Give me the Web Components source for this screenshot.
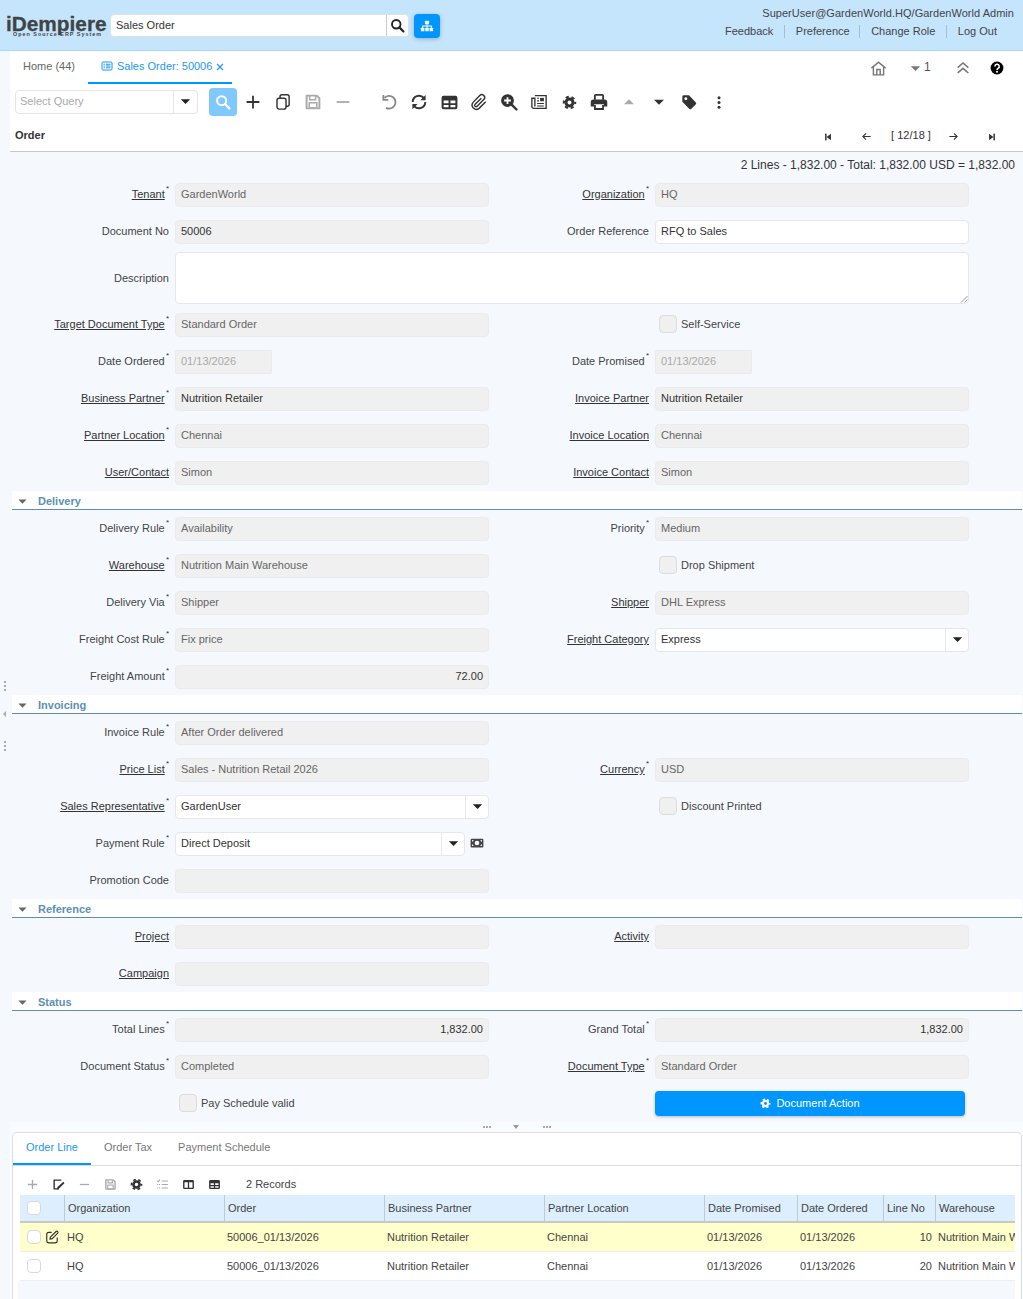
<!DOCTYPE html>
<html lang="en">
<head>
<meta charset="utf-8">
<title>iDempiere - Sales Order</title>
<style>
  html, body { margin:0; height:1299px; overflow:hidden; background:#fff; }
  body { font:11px "Liberation Sans", Arial, sans-serif; color:#444; display:flex; flex-direction:column; }
  #main { display:flex; flex:1; min-height:0; }
  #content { flex:1; min-width:0; display:flex; flex-direction:column; }
</style>
</head>
<body>
<app-header></app-header>
<div id="main">
  <side-rail></side-rail>
  <div id="content">
    <window-tabs></window-tabs>
    <window-toolbar></window-toolbar>
    <window-title></window-title>
    <form-panel>
      <form-row>
        <form-field label="Tenant" link req value="GardenWorld"></form-field>
        <form-field label="Organization" link req value="HQ"></form-field>
      </form-row>
      <form-row>
        <form-field label="Document No" value="50006" kind="ro-dark"></form-field>
        <form-field label="Order Reference" value="RFQ to Sales" kind="text"></form-field>
      </form-row>
      <form-row tall><form-field label="Description" kind="area"></form-field></form-row>
      <form-row>
        <form-field label="Target Document Type" link req value="Standard Order"></form-field>
        <form-field kind="check" value="Self-Service"></form-field>
      </form-row>
      <form-row>
        <form-field label="Date Ordered" req value="01/13/2026" kind="date"></form-field>
        <form-field label="Date Promised" req value="01/13/2026" kind="date"></form-field>
      </form-row>
      <form-row>
        <form-field label="Business Partner" link req value="Nutrition Retailer" kind="ro-dark"></form-field>
        <form-field label="Invoice Partner" link value="Nutrition Retailer" kind="ro-dark"></form-field>
      </form-row>
      <form-row>
        <form-field label="Partner Location" link req value="Chennai"></form-field>
        <form-field label="Invoice Location" link value="Chennai"></form-field>
      </form-row>
      <form-row>
        <form-field label="User/Contact" link value="Simon"></form-field>
        <form-field label="Invoice Contact" link value="Simon"></form-field>
      </form-row>

      <section-head>Delivery</section-head>
      <form-row>
        <form-field label="Delivery Rule" req value="Availability"></form-field>
        <form-field label="Priority" req value="Medium"></form-field>
      </form-row>
      <form-row>
        <form-field label="Warehouse" link req value="Nutrition Main Warehouse"></form-field>
        <form-field kind="check" value="Drop Shipment"></form-field>
      </form-row>
      <form-row>
        <form-field label="Delivery Via" req value="Shipper"></form-field>
        <form-field label="Shipper" link value="DHL Express"></form-field>
      </form-row>
      <form-row>
        <form-field label="Freight Cost Rule" req value="Fix price"></form-field>
        <form-field label="Freight Category" link value="Express" kind="combo"></form-field>
      </form-row>
      <form-row><form-field label="Freight Amount" req value="72.00" kind="num"></form-field></form-row>

      <section-head>Invoicing</section-head>
      <form-row><form-field label="Invoice Rule" req value="After Order delivered"></form-field></form-row>
      <form-row>
        <form-field label="Price List" link req value="Sales - Nutrition Retail 2026"></form-field>
        <form-field label="Currency" link req value="USD"></form-field>
      </form-row>
      <form-row>
        <form-field label="Sales Representative" link req value="GardenUser" kind="combo"></form-field>
        <form-field kind="check" value="Discount Printed"></form-field>
      </form-row>
      <form-row><form-field label="Payment Rule" req value="Direct Deposit" kind="combo-money"></form-field></form-row>
      <form-row><form-field label="Promotion Code"></form-field></form-row>

      <section-head>Reference</section-head>
      <form-row>
        <form-field label="Project" link></form-field>
        <form-field label="Activity" link></form-field>
      </form-row>
      <form-row><form-field label="Campaign" link></form-field></form-row>

      <section-head>Status</section-head>
      <form-row>
        <form-field label="Total Lines" req value="1,832.00" kind="num"></form-field>
        <form-field label="Grand Total" req value="1,832.00" kind="num"></form-field>
      </form-row>
      <form-row>
        <form-field label="Document Status" req value="Completed"></form-field>
        <form-field label="Document Type" link req value="Standard Order"></form-field>
      </form-row>
      <form-row>
        <form-field kind="check" value="Pay Schedule valid"></form-field>
        <form-field kind="action" value="Document Action"></form-field>
      </form-row>
    </form-panel>
    <split-bar></split-bar>
    <detail-pane></detail-pane>
  </div>
</div>

<script>
const ICONS = {
  search: '<circle cx="10" cy="10" r="6.8" fill="none" stroke="currentColor" stroke-width="3"/><path d="M15 15l6.5 6.5" stroke="currentColor" stroke-width="3.4" stroke-linecap="round"/>',
  plus: '<path d="M12 3.5v17M3.5 12h17" stroke="currentColor" stroke-width="2.4" fill="none"/>',
  minus: '<path d="M3.5 12h17" stroke="currentColor" stroke-width="2.4" fill="none"/>',
  copy: '<rect x="4" y="7" width="12" height="14.5" rx="2.8" fill="none" stroke="currentColor" stroke-width="1.9"/><path d="M8 7V5a2.6 2.6 0 0 1 2.6-2.6h7A2.6 2.6 0 0 1 20.2 5v10a2.6 2.6 0 0 1-2.6 2.6H16" fill="none" stroke="currentColor" stroke-width="1.9"/>',
  save: '<path d="M3.5 3.5h13.5l3.5 3.5v13.5h-17z" fill="none" stroke="currentColor" stroke-width="2.6" stroke-linejoin="round"/><path d="M7.5 4v5h8V4" fill="none" stroke="currentColor" stroke-width="2"/><rect x="7" y="13" width="10" height="7" fill="none" stroke="currentColor" stroke-width="2"/>',
  undo: '<path d="M6 6.5A8.5 8.5 0 1 1 8 19.8" fill="none" stroke="currentColor" stroke-width="2.4"/><path d="M4.5 2.5v6.6h6.6" fill="none" stroke="currentColor" stroke-width="2.4"/>',
  refresh: '<path d="M3.6 12A8.4 8.4 0 0 1 18.4 6.6" fill="none" stroke="currentColor" stroke-width="2.6"/><path d="M20.4 12A8.4 8.4 0 0 1 5.6 17.4" fill="none" stroke="currentColor" stroke-width="2.6"/><path d="M20.8 2.5v7h-7zM3.2 21.5v-7h7z" fill="currentColor"/>',
  table: '<path fill-rule="evenodd" fill="currentColor" d="M4.5 3.5h15A2.5 2.5 0 0 1 22 6v12a2.5 2.5 0 0 1-2.5 2.5h-15A2.5 2.5 0 0 1 2 18V6a2.5 2.5 0 0 1 2.5-2.5zM4.6 9.6v3.2h6.2V9.6zM13.2 9.6v3.2h6.2V9.6zM4.6 15v3h6.2v-3zM13.2 15v3h6.2v-3z"/>',
  clip: '<path d="M21 11.6l-8.9 8.9a5.7 5.7 0 0 1-8-8L13 3.4a3.8 3.8 0 0 1 5.4 5.4l-8.9 9a1.9 1.9 0 0 1-2.7-2.7l8.3-8.2" fill="none" stroke="currentColor" stroke-width="1.9"/>',
  zoomin: '<circle cx="10" cy="10" r="8.5" fill="currentColor"/><path d="M10 5.5v9M5.5 10h9" stroke="#fff" stroke-width="2.4"/><path d="M15.5 15.5l6.5 6.5" stroke="currentColor" stroke-width="3.2" stroke-linecap="round"/>',
  news: '<path d="M6.5 3.5h15v17H5A2.5 2.5 0 0 1 2.5 18V7h4v11" fill="none" stroke="currentColor" stroke-width="1.8"/><rect x="13.5" y="6.5" width="5" height="4.5" fill="currentColor"/><path d="M9.5 7h2.5M9.5 10.5h2.5M9.5 14h9M9.5 17.3h9" stroke="currentColor" stroke-width="1.6"/>',
  gear: '<circle cx="12" cy="12" r="5.6" fill="none" stroke="currentColor" stroke-width="4.8"/><circle cx="12" cy="12" r="9.2" fill="none" stroke="currentColor" stroke-width="3.2" stroke-dasharray="5 4.63" stroke-dashoffset="2.5"/>',
  print: '<path d="M6.5 9V3.8A1.3 1.3 0 0 1 7.8 2.5h8.4a1.3 1.3 0 0 1 1.3 1.3V9" fill="none" stroke="currentColor" stroke-width="2.4"/><path fill="currentColor" d="M4.5 8.5h15A3.5 3.5 0 0 1 23 12v6h-4.5v-3h-13v3H1v-6a3.5 3.5 0 0 1 3.5-3.5z"/><path d="M6.6 16v5.3h10.8V16" fill="none" stroke="currentColor" stroke-width="2.4"/>',
  up: '<path d="M12 8l7.5 7.5h-15z" fill="currentColor"/>',
  down: '<path d="M4.5 8.5h15L12 16z" fill="currentColor"/>',
  tag: '<path fill="currentColor" fill-rule="evenodd" d="M4 2h8l10 10.2a2.4 2.4 0 0 1 0 3.4l-6.4 6.4a2.4 2.4 0 0 1-3.4 0L2 11.8V4a2 2 0 0 1 2-2zM7.3 5a2.2 2.2 0 1 0 0 4.4 2.2 2.2 0 0 0 0-4.4z"/>',
  dots: '<circle cx="11.2" cy="4.5" r="2.4" fill="currentColor"/><circle cx="11.2" cy="12" r="2.4" fill="currentColor"/><circle cx="11.2" cy="19.5" r="2.4" fill="currentColor"/>',
  home: '<path d="M2 11.5L12 3l10 8.5" fill="none" stroke="currentColor" stroke-width="2"/><path d="M4.8 10v11h14.4V10" fill="none" stroke="currentColor" stroke-width="2"/><path d="M9.6 21v-7.5h4.8V21" fill="none" stroke="currentColor" stroke-width="2"/>',
  chevs: '<path d="M4 11.5l8-7 8 7M4 19.5l8-7 8 7" fill="none" stroke="currentColor" stroke-width="2.4"/>',
  help: '<circle cx="12" cy="12" r="11" fill="currentColor"/><path d="M8.4 9.4a3.7 3.7 0 1 1 5.4 3.3c-1.2.7-1.8 1.3-1.8 2.6" fill="none" stroke="#fff" stroke-width="2.6"/><circle cx="12" cy="18.5" r="1.7" fill="#fff"/>',
  first: '<rect x="5" y="4" width="3.6" height="16" fill="currentColor"/><path d="M19 4v16L8.6 12z" fill="currentColor"/>',
  last: '<rect x="15.4" y="4" width="3.6" height="16" fill="currentColor"/><path d="M5 4v16l10.4-8z" fill="currentColor"/>',
  left: '<path d="M21 12H4M11 5l-7 7 7 7" fill="none" stroke="currentColor" stroke-width="2.4"/>',
  right: '<path d="M3 12h17M13 5l7 7-7 7" fill="none" stroke="currentColor" stroke-width="2.4"/>',
  sitemap: '<rect x="8.5" y="3" width="7" height="6" rx="1" fill="currentColor"/><rect x="1.5" y="15" width="6" height="6" rx="1" fill="currentColor"/><rect x="9" y="15" width="6" height="6" rx="1" fill="currentColor"/><rect x="16.5" y="15" width="6" height="6" rx="1" fill="currentColor"/><path d="M4.5 15v-3h15v3M12 9v6" fill="none" stroke="currentColor" stroke-width="1.8"/>',
  list: '<rect x="2" y="4" width="20" height="16" rx="2" fill="none" stroke="currentColor" stroke-width="2"/><path d="M5 8.5h2.5M5 12h2.5M5 15.500h2.500M9.500 8.500H19M9.500 12H19M9.500 15.500H19" stroke="currentColor" stroke-width="2"/>',
  close: '<path d="M3 3l18 18M21 3L3 21" stroke="currentColor" stroke-width="3.4" fill="none"/>',
  money: '<path fill="currentColor" fill-rule="evenodd" d="M3 4.5h18A2 2 0 0 1 23 6.500v11a2 2 0 0 1-2 2H3a2 2 0 0 1-2-2v-11a2 2 0 0 1 2-2zM12 8a4 4 0 1 0 0 8 4 4 0 0 0 0-8zM3.500 7v3A3 3 0 0 0 6 7zM3.500 17h2.500A3 3 0 0 0 3.500 14zM18 7a3 3 0 0 0 2.500 3V7zM18 17h2.500v-3A3 3 0 0 0 18 17z"/>',
  edit: '<path d="M11.500 4H6.500A3.500 3.500 0 0 0 3 7.500v11A3.500 3.500 0 0 0 6.500 22h11a3.500 3.500 0 0 0 3.500-3.500V13" fill="none" stroke="currentColor" stroke-width="2"/><path d="M19 2.500a2 2 0 0 1 2.800 2.800L12.500 14.800l-4 1 1-4z" fill="none" stroke="currentColor" stroke-width="2" stroke-linejoin="round"/>',
  editbar: '<path d="M16 5V4H4v16h9" fill="none" stroke="currentColor" stroke-width="2.600"/><path d="M21 7l2 2.500-10 10-4 1.500 1-4.500z" fill="currentColor"/>',
  checks: '<path d="M10.500 5.500H22M10.500 12H22M10.500 18.500H22" stroke="currentColor" stroke-width="2" fill="none"/><path d="M2 5l2 2 3.500-4M2 12h1.500M5 12h2.500M2 18.500h1.500M5 18.500h2.500" stroke="currentColor" stroke-width="2" fill="none"/>',
  columns: '<path fill-rule="evenodd" fill="currentColor" d="M4.500 3.500h15A2.500 2.500 0 0 1 22 6v12a2.500 2.500 0 0 1-2.500 2.500h-15A2.500 2.500 0 0 1 2 18V6a2.500 2.500 0 0 1 2.500-2.500zM4.600 8v10h6.200V8zM13.200 8v10h6.200V8z"/>'
};

class UiIcon extends HTMLElement {
  connectedCallback() {
    const size = this.getAttribute('size') || 18;
    const name = this.getAttribute('name');
    if (!this.shadowRoot) this.attachShadow({ mode: 'open' });
    this.shadowRoot.innerHTML = `
      <style>
        :host { display:inline-flex; flex:none; width:${size}px; height:${size}px; }
        svg { width:100%; height:100%; display:block; overflow:visible; }
      </style>
      <svg viewBox="0 0 24 24" aria-hidden="true">${ICONS[name] || ''}</svg>`;
  }
}
customElements.define('ui-icon', UiIcon);

class AppHeader extends HTMLElement {
  constructor() {
    super();
    this.attachShadow({ mode: 'open' }).innerHTML = `
      <style>
        :host { display:flex; height:50px; flex:none; box-sizing:content-box; background:#c5e5fd; border-bottom:1px solid #a6d9fd; color:#444; font-size:11px; }
        .logo { width:104px; margin-left:6px; padding-top:16px; line-height:1; color:#3f4446; }
        .logo b { display:block; font:bold 20.8px/16px "Liberation Sans", sans-serif; -webkit-text-stroke:.3px #3f4446; }
        .logo i { display:block; font:bold 5.400px/5px "Liberation Sans", sans-serif; letter-spacing:1.020px; margin:0 0 0 7px; white-space:nowrap; color:#444; }
        .search { margin:14px 0 0 0; width:299px; height:23px; display:flex; background:#fff; border:1px solid #d8e3ec; border-radius:4px; box-sizing:border-box; color:#333; }
        .search span { flex:1; padding-left:5px; line-height:21px; }
        .search div { width:21px; border-left:1px solid #ccc; display:flex; align-items:center; justify-content:center; color:#222; }
        .tree { margin:14px 0 0 5px; width:26px; height:24px; background:#0096ff; color:#fff; border-radius:4px; display:flex; align-items:center; justify-content:center; box-shadow:0 1px 4px rgba(0,0,0,.25); }
        .user { margin-left:auto; padding:7px 9px 0 0; display:flex; flex-direction:column; align-items:flex-end; }
        .user .who { line-height:13px; letter-spacing:.03px; }
        .links { display:flex; margin:5px 17px 0 0; line-height:13px; }
        .links span { padding:0 10.75px; border-left:1px solid #a9bccb; }
        .links span:first-child { border:0; }
        .links span:nth-child(2) { padding-right:9.75px; }
        .links span:last-child { padding-right:0; }
      </style>
      <div class="logo"><b>iDempiere</b><i>Open Source ERP System</i></div>
      <div class="search"><span>Sales Order</span><div><ui-icon name="search" size="15"></ui-icon></div></div>
      <div class="tree"><ui-icon name="sitemap" size="14"></ui-icon></div>
      <div class="user">
        <div class="who">SuperUser@GardenWorld.HQ/GardenWorld Admin</div>
        <div class="links"><span>Feedback</span><span>Preference</span><span>Change Role</span><span>Log Out</span></div>
      </div>`;
  }
}
customElements.define('app-header', AppHeader);

class SideRail extends HTMLElement {
  constructor() {
    super();
    this.attachShadow({ mode: 'open' }).innerHTML = `
      <style>
        :host { display:flex; flex-direction:column; width:10px; flex:none; background:#f5f9fe; box-sizing:border-box; padding:630px 0 0 4px; }
        .grip { display:grid; gap:2px; width:2px; }
        .grip i { width:2px; height:2px; background:#aaa; display:block; }
        .arrow { margin:20px 0 24px -1px; width:0; height:0; border:3px solid transparent; border-left:0; border-right:3px solid #aaa; }
      </style>
      <div class="grip"><i></i><i></i><i></i></div>
      <div class="arrow"></div>
      <div class="grip"><i></i><i></i><i></i></div>`;
  }
}
customElements.define('side-rail', SideRail);

class WindowTabs extends HTMLElement {
  constructor() {
    super();
    this.attachShadow({ mode: 'open' }).innerHTML = `
      <style>
        :host { display:flex; height:33px; flex:none; background:#fff; color:#666; font-size:11px; }
        .tab { display:flex; align-items:center; height:29px; padding-bottom:2px; }
        .home { padding:0 13px 2px; }
        .active { padding:0 8px 2px 13px; color:#1e96f0; border-bottom:2px solid #0096ff; gap:4px; }
        .active ui-icon:last-child { margin:3px 0 0 0; }
        .tools { margin-left:auto; display:flex; align-items:center; height:33px; color:#777; }
      </style>
      <div class="tab home">Home (44)</div>
      <div class="tab active"><ui-icon name="list" size="12"></ui-icon><span>Sales Order: 50006</span><ui-icon name="close" size="8"></ui-icon></div>
      <div class="tools">
        <ui-icon name="home" size="17" style="margin:1px 0 0 0"></ui-icon>
        <ui-icon name="down" size="15" style="margin:1px 0 0 21px"></ui-icon>
        <span style="font-size:12px;color:#555;margin:-2px 0 0 1px;width:8px">1</span>
        <ui-icon name="chevs" size="16" style="margin-left:23px"></ui-icon>
        <ui-icon name="help" size="14" style="margin:1px 19px 0 19px;color:#000"></ui-icon>
      </div>`;
  }
}
customElements.define('window-tabs', WindowTabs);

class WindowToolbar extends HTMLElement {
  constructor() {
    super();
    const btn = (n, c, s) => `<div class="b" style="color:${c || '#333'}"><ui-icon name="${n}" size="${s || 18}"></ui-icon></div>`;
    this.attachShadow({ mode: 'open' }).innerHTML = `
      <style>
        :host { display:flex; align-items:center; height:36px; flex:none; background:#fff; padding:0 0 0 5px; box-sizing:border-box; }
        .query { width:183px; height:24px; box-sizing:border-box; display:flex; background:#fff; border:1px solid #e5e5e5; border-radius:4px; color:#aaa; }
        .query span { flex:1; padding-left:4px; line-height:21px; }
        .query div { width:23px; border-left:1px solid #e5e5e5; display:flex; align-items:center; justify-content:center; color:#222; }
        .query ui-icon { margin-top:-2px; }
        .find { margin:0 1px 0 11px; width:28px; height:28px; background:#80c9ff; color:#fff; border-radius:4px; display:flex; align-items:center; justify-content:center; }
        .b { width:30px; height:28px; display:flex; align-items:center; justify-content:center; }
        .sp { width:16px; }
      </style>
      <div class="query"><span>Select Query</span><div><ui-icon name="down" size="15"></ui-icon></div></div>
      <div class="find"><ui-icon name="search" size="16"></ui-icon></div>
      ${btn('plus')}${btn('copy')}${btn('save', '#aaa')}${btn('minus', '#aaa')}
      <div class="sp"></div>
      ${btn('undo', '#888')}${btn('refresh')}${btn('table', '#333', 19)}${btn('clip')}${btn('zoomin')}${btn('news')}${btn('gear', '#333', 15)}${btn('print', '#333', 18)}${btn('up', '#aaa', 16)}${btn('down', '#333', 16)}${btn('tag', '#333', 16)}${btn('dots', '#333', 15)}`;
  }
}
customElements.define('window-toolbar', WindowToolbar);

class WindowTitle extends HTMLElement {
  constructor() {
    super();
    this.attachShadow({ mode: 'open' }).innerHTML = `
      <style>
        :host { display:flex; align-items:center; height:32px; flex:none; box-sizing:border-box; background:#fff; border-bottom:1px solid #c8c8c8; padding:0 0 0 5px; color:#333; font-size:11px; }
        b { font-weight:bold; margin-top:-1px; }
        .nav { margin-left:auto; display:flex; align-items:center; color:#333; margin-right:26px; padding-top:2px; }
        .nav span { margin-top:-4px; width:40px; text-align:center; white-space:nowrap; }
      </style>
      <b>Order</b>
      <div class="nav">
        <ui-icon name="first" size="10"></ui-icon>
        <ui-icon name="left" size="11" style="margin-left:28px"></ui-icon>
        <span style="margin-left:19px">[ 12/18 ]</span>
        <ui-icon name="right" size="11" style="margin-left:17px"></ui-icon>
        <ui-icon name="last" size="10" style="margin-left:28px"></ui-icon>
      </div>`;
  }
}
customElements.define('window-title', WindowTitle);

class FormPanel extends HTMLElement {
  constructor() {
    super();
    this.attachShadow({ mode: 'open' }).innerHTML = `
      <style>
        :host { display:block; flex:none; background:#f5f9fe; color:#444; }
        .sum { height:24px; box-sizing:border-box; padding:7px 8px 0 0; text-align:right; font-size:12px; line-height:13px; color:#333; }
      </style>
      <div class="sum">2 Lines - 1,832.00 - Total: 1,832.00 USD = 1,832.00</div>
      <slot></slot>`;
  }
}
customElements.define('form-panel', FormPanel);

class FormRow extends HTMLElement {
  constructor() {
    super();
    this.attachShadow({ mode: 'open' }).innerHTML = `
      <style>
        :host { display:grid; grid-template-columns:480px 480px; height:37px; box-sizing:border-box; padding-top:7px; }
        :host([tall]) { height:57px; margin-top:-1px; padding-top:3px; grid-template-columns:960px; }
      </style>
      <slot></slot>`;
  }
}
customElements.define('form-row', FormRow);

class FormField extends HTMLElement {
  connectedCallback() { this.render(); }
  render() {
    if (!this.shadowRoot) this.attachShadow({ mode: 'open' });
    const kind = this.getAttribute('kind') || 'ro';
    const label = this.getAttribute('label') || '';
    const value = this.getAttribute('value') || '';
    const arrow = '<div class="arr"><ui-icon name="down" size="15"></ui-icon></div>';
    let box;
    if (kind === 'check') box = `<div class="check"><i></i><span>${value}</span></div>`;
    else if (kind === 'action') box = `<div class="action"><ui-icon name="gear" size="11"></ui-icon><span>${value}</span></div>`;
    else if (kind === 'area') box = `<div class="box area"><svg class="grip" width="8" height="8" viewBox="0 0 8 8"><path d="M7.500 1L1 7.500M7.500 4.500L4.500 7.500" stroke="#999" fill="none"/></svg></div>`;
    else if (kind === 'combo') box = `<div class="box combo"><span>${value}</span>${arrow}</div>`;
    else if (kind === 'combo-money') box = `<div class="wrap"><div class="box combo short"><span>${value}</span>${arrow}</div><ui-icon class="money" name="money" size="14"></ui-icon></div>`;
    else box = `<div class="box ${kind}"><span>${value}</span></div>`;
    this.shadowRoot.innerHTML = `
      <style>
        :host { display:grid; grid-template-columns:159px 314px; column-gap:6px; align-items:start; font-size:11px; color:#444; }
        .lab { text-align:right; line-height:22px; white-space:nowrap; color:#444; }
        .lab.big { line-height:52px; }
        .lab u { text-underline-offset:1px; color:#333; }
        .lab sup { display:inline-block; width:4.3px; margin-left:0; font-size:8px; line-height:0; vertical-align:7px; text-align:right; color:#333; }
        .box { height:24px; box-sizing:border-box; border-radius:4px; display:flex; align-items:center; overflow:hidden; }
        .box span { flex:1; padding:0 5px 2px; white-space:nowrap; }
        .ro, .ro-dark, .num, .date { background:#f0f0f0; border:1px solid #e9ebee; color:#666; }
        .ro-dark, .num { color:#333; }
        .num span { text-align:right; }
        .date { width:97px; color:#aaa; border-radius:2px; }
        .text, .combo, .area { background:#fff; border:1px solid #e4e8ee; color:#333; }
        .area { width:794px; height:52px; position:relative; }
        .grip { position:absolute; right:0; bottom:0; }
        .arr { width:22px; height:100%; border-left:1px solid #e4e8ee; display:flex; align-items:center; justify-content:center; color:#222; }
        .arr ui-icon { margin-top:-2px; }
        .wrap { display:flex; align-items:center; }
        .short { width:290px; }
        .money { margin:-2px 0 0 5px; color:#444; }
        .check { grid-column:2; display:flex; align-items:center; gap:4px; padding:2px 0 0 4px; color:#444; }
        .check i { width:18px; height:18px; box-sizing:border-box; background:#f0f0f0; border:1px solid #dcdcdc; border-radius:4px; display:block; }
        .action { grid-column:2; width:310px; height:25px; margin-top:-1px; padding-bottom:1px; box-sizing:border-box; background:#0096ff; color:#fff; border-radius:4px; display:flex; align-items:center; justify-content:center; gap:5px; box-shadow:0 1px 3px rgba(0,0,0,.25); }
      </style>
      <div class="lab ${kind === 'area' ? 'big' : ''}">${label ? (this.hasAttribute('link') ? `<u>${label}</u>` : label) : ''}${this.hasAttribute('req') ? '<sup>*</sup>' : ''}</div>
      ${box}`;
  }
}
customElements.define('form-field', FormField);

class SectionHead extends HTMLElement {
  constructor() {
    super();
    this.attachShadow({ mode: 'open' }).innerHTML = `
      <style>
        :host { display:flex; align-items:center; height:19px; box-sizing:border-box; margin:0 1px 0 2px; padding:2px 0 0 4px; background:#fff; border-bottom:1px solid #5e8fb0; font:bold 11px "Liberation Sans", sans-serif; color:#5c90b5; }
        ui-icon { color:#666; margin-right:9px; }
      </style>
      <ui-icon name="down" size="13"></ui-icon><slot></slot>`;
  }
}
customElements.define('section-head', SectionHead);

class SplitBar extends HTMLElement {
  constructor() {
    super();
    this.attachShadow({ mode: 'open' }).innerHTML = `
      <style>
        :host { display:flex; align-items:center; height:10px; flex:none; background:#f9fcfe; padding-left:473px; }
        .g { display:flex; gap:1px; }
        .g i { display:block; width:2px; height:2px; background:#aaa; }
        .t { margin:0 24px 0 22px; width:0; height:0; border:3.500px solid transparent; border-bottom:0; border-top:4px solid #999; }
      </style>
      <div class="g"><i></i><i></i><i></i></div><div class="t"></div><div class="g"><i></i><i></i><i></i></div>`;
  }
}
customElements.define('split-bar', SplitBar);

class DetailPane extends HTMLElement {
  constructor() {
    super();
    const COLS = '44px 160px 160px 160px 160px 93px 86px 52px 80px';
    const rows = [['HQ', '50006_01/13/2026', 'Nutrition Retailer', 'Chennai', '01/13/2026', '01/13/2026', '10', 'Nutrition Main Warehouse'],
                  ['HQ', '50006_01/13/2026', 'Nutrition Retailer', 'Chennai', '01/13/2026', '01/13/2026', '20', 'Nutrition Main Warehouse']];
    const heads = ['Organization', 'Order', 'Business Partner', 'Partner Location', 'Date Promised', 'Date Ordered', 'Line No', 'Warehouse'];
    const tb = (n, c) => `<div class="b" style="color:${c}"><ui-icon name="${n}" size="13"></ui-icon></div>`;
    this.attachShadow({ mode: 'open' }).innerHTML = `
      <style>
        :host { display:flex; flex:1; min-height:0; background:#f9fcfe; padding:0 1px 0 2px; }
        .box { flex:1; min-width:0; display:flex; flex-direction:column; background:#fff; border:1px solid #ddd; border-bottom:0; border-radius:5px 5px 0 0; color:#444; font-size:11px; }
        .tabs { display:flex; height:32px; border-bottom:1px solid #ddd; color:#777; flex:none; }
        .tabs div { padding:0 13px; line-height:29px; height:30px; }
        .tabs .on { color:#1e96f0; border-bottom:2px solid #0096ff; }
        .tools { display:flex; align-items:flex-start; height:29px; box-sizing:border-box; padding:12px 0 0 6px; flex:none; }
        .b { width:26px; display:flex; justify-content:center; }
        .count { margin-left:19px; line-height:13px; color:#444; }
        .grid { margin-left:7px; width:995px; flex:none; overflow:hidden; }
        .r { display:grid; grid-template-columns:${COLS}; }
        .h { height:28px; background:#ddeffe; border-bottom:2px solid #c8c8c8; box-sizing:border-box; align-items:center; }
        .h span { display:block; height:100%; line-height:26px; padding-left:3px; border-left:1px solid #c0c8d0; white-space:nowrap; overflow:hidden; box-sizing:border-box; color:#444; }
        .h span.c0 { border:0; padding:0; display:flex; align-items:center; }
        .d { height:29px; box-sizing:border-box; border-bottom:1px solid #eee; align-items:center; }
        .d span { padding-left:3px; white-space:nowrap; overflow:hidden; color:#444; }
        .d span.c0 { padding:0; display:flex; align-items:center; overflow:visible; }
        .d span.n { text-align:right; padding:0 3px 0 0; }
        .sel { background:#ffffcc; }
        .cb { display:block; width:14px; height:14px; box-sizing:border-box; margin-left:7px; background:#fff; border:1px solid #d8d8d8; border-radius:4px; flex:none; }
        .fill { flex:1; margin:0 6px 0 5px; background:#f5f9fe; }
      </style>
      <div class="box">
        <div class="tabs"><div class="on">Order Line</div><div>Order Tax</div><div>Payment Schedule</div></div>
        <div class="tools">
          ${tb('plus', '#aaa')}${tb('editbar', '#333')}${tb('minus', '#aaa')}${tb('save', '#aaa')}${tb('gear', '#333')}${tb('checks', '#aaa')}${tb('columns', '#333')}${tb('table', '#333')}
          <span class="count">2 Records</span>
        </div>
        <div class="grid">
          <div class="r h"><span class="c0"><i class="cb"></i></span>${heads.map(h => `<span>${h}</span>`).join('')}</div>
          ${rows.map((row, i) => `<div class="r d ${i === 0 ? 'sel' : ''}"><span class="c0"><i class="cb"></i>${i === 0 ? '<ui-icon name="edit" size="14" style="margin-left:4px;color:#333"></ui-icon>' : ''}</span>${row.map((c, j) => `<span class="${j === 6 ? 'n' : ''}">${c}</span>`).join('')}</div>`).join('')}
        </div>
        <div class="fill"></div>
      </div>`;
  }
}
customElements.define('detail-pane', DetailPane);
</script>
</body>
</html>
